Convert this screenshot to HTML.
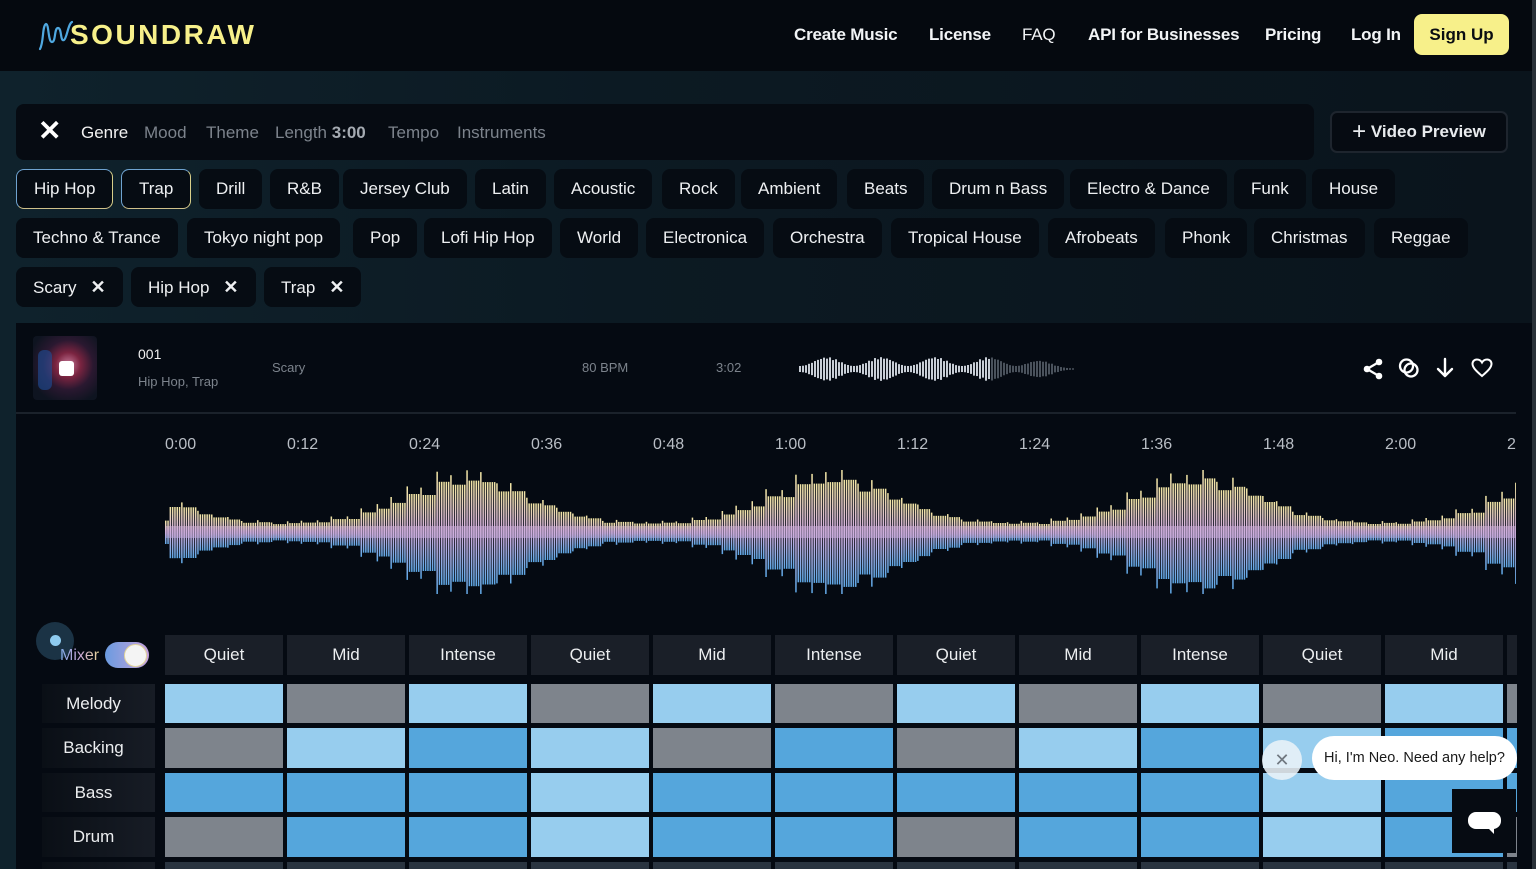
<!DOCTYPE html>
<html><head><meta charset="utf-8">
<style>
*{margin:0;padding:0;box-sizing:border-box}
body{width:1536px;height:869px;overflow:hidden;background:#0d1b25;font-family:"Liberation Sans",Arial,sans-serif;color:#fff;position:relative}
.a{position:absolute}
#hdr{left:0;top:0;width:1532px;height:71px;background:#05090f}
.nav{top:25px;font-size:17px;font-weight:bold;color:#f2f4f6;letter-spacing:-.2px}
#main{left:0;top:71px;width:1532px;height:798px;background:linear-gradient(90deg,#0f222c 0,#0c1a23 40%,#0a141c 100%)}
#sb{left:1532px;top:0;width:4px;height:869px;background:#2a3138}
.chip{position:absolute;height:40px;background:#060c13;border-radius:8px;font-size:17px;line-height:40px;padding:0 17px;color:#eef0f2;white-space:nowrap}
.sel{border:1.5px solid #6fa3d0;line-height:37px;border-right-color:#d8cf8a;border-bottom-color:#cfc08a}
.x{font-weight:bold;margin-left:14px;font-size:18px}
.cell{position:absolute;width:118px}
.L{background:#97cdee}.G{background:#7e848c}.B{background:#55a6dc}
.hd{background:#1a1f28;font-size:17px;text-align:center;line-height:40px;color:#eceef0}
.rl{position:absolute;left:42px;width:113px;background:linear-gradient(90deg,#0a0f16,#171c25);font-size:17px;text-align:center;color:#eceef0;padding-right:10px}
.tl{position:absolute;top:436px;font-size:16px;color:#b9bec5}
</style></head><body>
<div id="hdr" class="a">
<svg class="a" style="left:38px;top:18px" width="36" height="34" viewBox="0 0 36 34"><path d="M2 31 C6 24 4 8 8 6 C11 6 10 24 14 24 C18 24 16 10 20 10 C24 10 22 24 26 22 C29 20 30 6 34 4" stroke="#4fa8e0" stroke-width="2.2" fill="none" stroke-linecap="round"/></svg>
<div class="a" style="left:70px;top:19px;font-size:28px;font-weight:bold;letter-spacing:2.5px;color:#f7f08a">SOUNDRAW</div>
<div class="a nav" style="left:794px">Create Music</div>
<div class="a nav" style="left:929px">License</div>
<div class="a nav" style="left:1022px;font-weight:normal">FAQ</div>
<div class="a nav" style="left:1088px">API for Businesses</div>
<div class="a nav" style="left:1265px">Pricing</div>
<div class="a nav" style="left:1351px">Log In</div>
<div class="a" style="left:1414px;top:14px;width:95px;height:41px;background:#f7f08a;border-radius:8px;color:#0a0d12;font-weight:bold;font-size:17px;line-height:41px;text-align:center">Sign Up</div>
</div>
<div id="main" class="a"></div>
<div id="sb" class="a"></div>

<div class="a" style="left:16px;top:104px;width:1298px;height:56px;background:#060b12;border-radius:8px"></div>
<div class="a" style="left:38px;top:117px;font-size:28px;font-weight:bold;color:#fff;line-height:28px">✕</div>
<div class="a" style="left:81px;top:123px;font-size:17px;color:#f2f2f2">Genre</div>
<div class="a" style="left:144px;top:123px;font-size:17px;color:#7c838c">Mood</div>
<div class="a" style="left:206px;top:123px;font-size:17px;color:#7c838c">Theme</div>
<div class="a" style="left:275px;top:123px;font-size:17px;color:#7c838c">Length <b style="color:#a5abb2">3:00</b></div>
<div class="a" style="left:388px;top:123px;font-size:17px;color:#7c838c">Tempo</div>
<div class="a" style="left:457px;top:123px;font-size:17px;color:#7c838c">Instruments</div>
<div class="a" style="left:1330px;top:111px;width:178px;height:42px;border:2px solid #1e252e;border-radius:7px;background:#060b12;font-size:17px;font-weight:bold;line-height:38px;text-align:center;color:#e8ebee"><span style="font-size:24px;vertical-align:-2px;font-weight:normal">+</span> Video Preview</div>

<div class="chip sel" style="left:16px;top:169px;width:97px">Hip Hop</div>
<div class="chip sel" style="left:121px;top:169px;width:70px">Trap</div>
<div class="chip" style="left:199px;top:169px">Drill</div>
<div class="chip" style="left:270px;top:169px">R&amp;B</div>
<div class="chip" style="left:343px;top:169px">Jersey Club</div>
<div class="chip" style="left:475px;top:169px">Latin</div>
<div class="chip" style="left:554px;top:169px">Acoustic</div>
<div class="chip" style="left:662px;top:169px">Rock</div>
<div class="chip" style="left:741px;top:169px">Ambient</div>
<div class="chip" style="left:847px;top:169px">Beats</div>
<div class="chip" style="left:932px;top:169px">Drum n Bass</div>
<div class="chip" style="left:1070px;top:169px">Electro &amp; Dance</div>
<div class="chip" style="left:1234px;top:169px">Funk</div>
<div class="chip" style="left:1312px;top:169px">House</div>

<div class="chip" style="left:16px;top:218px">Techno &amp; Trance</div>
<div class="chip" style="left:187px;top:218px">Tokyo night pop</div>
<div class="chip" style="left:353px;top:218px">Pop</div>
<div class="chip" style="left:424px;top:218px">Lofi Hip Hop</div>
<div class="chip" style="left:560px;top:218px">World</div>
<div class="chip" style="left:646px;top:218px">Electronica</div>
<div class="chip" style="left:773px;top:218px">Orchestra</div>
<div class="chip" style="left:891px;top:218px">Tropical House</div>
<div class="chip" style="left:1048px;top:218px">Afrobeats</div>
<div class="chip" style="left:1165px;top:218px">Phonk</div>
<div class="chip" style="left:1254px;top:218px">Christmas</div>
<div class="chip" style="left:1374px;top:218px">Reggae</div>

<div class="chip" style="left:16px;top:267px">Scary<span class="x">✕</span></div>
<div class="chip" style="left:131px;top:267px">Hip Hop<span class="x">✕</span></div>
<div class="chip" style="left:264px;top:267px">Trap<span class="x">✕</span></div>

<div class="a" style="left:16px;top:323px;width:1516px;height:546px;background:#050a12"></div>
<div class="a" style="left:16px;top:412px;width:1500px;height:2px;background:#1b222b"></div>
<div class="a" style="left:33px;top:336px;width:64px;height:64px;border-radius:4px;background:radial-gradient(circle at 55% 45%,#c77a9a 0,#7a2440 25%,#2a1830 50%,#0e1420 80%)"></div>
<div class="a" style="left:38px;top:350px;width:14px;height:40px;background:#1f4f9a;opacity:.6;border-radius:6px"></div>
<div class="a" style="left:59px;top:361px;width:15px;height:15px;background:#fff;border-radius:3px"></div>
<div class="a" style="left:138px;top:346px;font-size:14px;color:#f0f0f0">001</div>
<div class="a" style="left:138px;top:374px;font-size:13px;color:#7c838c">Hip Hop, Trap</div>
<div class="a" style="left:272px;top:360px;font-size:13px;color:#7c838c">Scary</div>
<div class="a" style="left:582px;top:360px;font-size:13px;color:#7c838c">80 BPM</div>
<div class="a" style="left:716px;top:360px;font-size:13px;color:#7c838c">3:02</div>
<svg id="sw" class="a" style="left:797px;top:355px" width="280" height="28"></svg>

<svg class="a" style="left:1362px;top:358px" width="22" height="22" viewBox="0 0 22 22"><circle cx="17" cy="4" r="3.3" fill="#fff"/><circle cx="5" cy="11" r="3.3" fill="#fff"/><circle cx="17" cy="18" r="3.3" fill="#fff"/><path d="M5 11L17 4M5 11L17 18" stroke="#fff" stroke-width="2.2"/></svg>
<svg class="a" style="left:1398px;top:357px" width="22" height="22" viewBox="0 0 22 22"><circle cx="8.5" cy="9" r="6.5" stroke="#fff" stroke-width="2.3" fill="none"/><circle cx="13" cy="13" r="6.5" stroke="#fff" stroke-width="2.3" fill="none"/></svg>
<svg class="a" style="left:1435px;top:357px" width="20" height="22" viewBox="0 0 20 22"><path d="M10 2V19M3 12L10 19L17 12" stroke="#fff" stroke-width="2.4" fill="none" stroke-linecap="round" stroke-linejoin="round"/></svg>
<svg class="a" style="left:1471px;top:358px" width="22" height="20" viewBox="0 0 22 20"><path d="M11 18C4 12 1.5 9 1.5 5.8 1.5 3.4 3.4 1.5 5.9 1.5 8 1.5 10 2.8 11 4.5 12 2.8 14 1.5 16.1 1.5 18.6 1.5 20.5 3.4 20.5 5.8 20.5 9 18 12 11 18Z" stroke="#fff" stroke-width="2" fill="none"/></svg>

<div class="tl" style="left:165px">0:00</div>
<div class="tl" style="left:287px">0:12</div>
<div class="tl" style="left:409px">0:24</div>
<div class="tl" style="left:531px">0:36</div>
<div class="tl" style="left:653px">0:48</div>
<div class="tl" style="left:775px">1:00</div>
<div class="tl" style="left:897px">1:12</div>
<div class="tl" style="left:1019px">1:24</div>
<div class="tl" style="left:1141px">1:36</div>
<div class="tl" style="left:1263px">1:48</div>
<div class="tl" style="left:1385px">2:00</div>
<div class="tl" style="left:1507px">2</div>

<svg id="bw" class="a" style="left:165px;top:470px" width="1351" height="124">
<defs><linearGradient id="g" x1="0" y1="0" x2="0" y2="1"><stop offset="0" stop-color="#f3e7a4"/><stop offset=".45" stop-color="#d4b0dc"/><stop offset=".55" stop-color="#c9aee0"/><stop offset="1" stop-color="#5ea8e6"/></linearGradient></defs>
</svg>

<div class="a" style="left:36px;top:622px;width:38px;height:38px;border-radius:50%;background:#1b3345"></div>
<div class="a" style="left:50px;top:635px;width:11px;height:11px;border-radius:50%;background:#8ecbef"></div>
<div class="a" style="left:60px;top:647px;font-size:16px;background:linear-gradient(90deg,#7fa9e6,#c8a6d8,#e8d498);-webkit-background-clip:text;color:transparent">Mixer</div>
<div class="a" style="left:105px;top:642px;width:44px;height:26px;border-radius:13px;background:linear-gradient(90deg,#6a9be0,#c7a3db)"></div>
<div class="a" style="left:124px;top:644px;width:23px;height:23px;border-radius:50%;background:#f4f4f4;border:1.5px solid #e2d59a"></div>

<div class="rl" style="top:684px;height:39px;line-height:39px">Melody</div>
<div class="rl" style="top:728px;height:40px;line-height:40px">Backing</div>
<div class="rl" style="top:773px;height:39px;line-height:39px">Bass</div>
<div class="rl" style="top:817px;height:40px;line-height:40px">Drum</div>
<div class="rl" style="top:862px;height:7px"></div>
<div id="grid"></div>

<div class="a" style="left:1262px;top:740px;width:40px;height:40px;border-radius:50%;background:rgba(235,242,248,.88);color:#707880;font-size:18px;text-align:center;line-height:40px">✕</div>
<div class="a" style="left:1312px;top:736px;width:205px;height:44px;border-radius:22px;background:#fff;color:#1a1a1a;font-size:14.5px;line-height:44px;text-align:center">Hi, I'm Neo. Need any help?</div>
<div class="a" style="left:1452px;top:789px;width:64px;height:64px;background:#060b12"></div>
<div class="a" style="left:1468px;top:812px;width:33px;height:17px;border-radius:8px;background:#fff"></div>
<div class="a" style="left:1488px;top:828px;width:0;height:0;border-left:6px solid transparent;border-top:6px solid #fff"></div>

<script>
(function(){var s=document.getElementById('sw'),h='';
for(var i=0;i<92;i++){var x=2+i*3;var ph=(i%18)/18;var a=3+9*Math.pow(Math.sin(Math.PI*ph),2)*(0.7+0.3*Math.abs(Math.sin(i*1.7)));
if(i>74)a*=Math.max(0.2,1-(i-74)/22);var c=i<64?'#c8ced6':'#4a525c';h+='<rect x="'+x+'" y="'+(14-a)+'" width="2" height="'+(2*a)+'" fill="'+c+'"/>';}
s.innerHTML=h;})();
(function(){var s=document.getElementById('bw'),h=s.innerHTML;var P=366,c=62;
h+='<rect x="0" y="'+(c-6)+'" width="1351" height="12" fill="#c9aede" opacity=".55"/>';
for(var x=0;x<1351;x+=2.3){var seg=Math.floor(x/15);var sx=seg*15;var t=((sx-295)%P+P)%P;var d=Math.min(t,P-t);var env=Math.exp(-d*d/(2*60*60));
var beat=(x%15<2.3)?1.2:1;var step=0.8+0.2*Math.abs(Math.sin(seg*1.3));var a=(9+48*env)*beat*step;
if(x<4)a=12;h+='<rect x="'+x.toFixed(1)+'" y="'+(c-a*0.95).toFixed(1)+'" width="1.5" height="'+(a*1.95).toFixed(1)+'" fill="url(#g)"/>';}
s.innerHTML=h;})();
(function(){var g=document.getElementById('grid'),h='';var hd=['Quiet','Mid','Intense'];
var rows=[['L','G','L','G','L','G','L','G','L','G','L','G'],['G','L','B','L','G','B','G','L','B','L','B','B'],['B','B','B','L','B','B','B','B','B','L','B','B'],['G','B','B','L','B','B','G','B','B','L','B','G']];
var tops=[[684,39],[728,40],[773,39],[817,40]];
for(var i=0;i<12;i++){var x=165+i*122;var w=i==11?10:118;
h+='<div class="cell hd" style="left:'+x+'px;top:635px;height:40px;width:'+w+'px">'+(i<11?hd[i%3]:'')+'</div>';
for(var r=0;r<4;r++)h+='<div class="cell '+rows[r][i]+'" style="left:'+x+'px;top:'+tops[r][0]+'px;height:'+tops[r][1]+'px;width:'+w+'px"></div>';
h+='<div class="cell" style="left:'+x+'px;top:862px;height:7px;width:'+w+'px;background:#2a3440"></div>';}
g.innerHTML=h;})();
</script>
</body></html>
